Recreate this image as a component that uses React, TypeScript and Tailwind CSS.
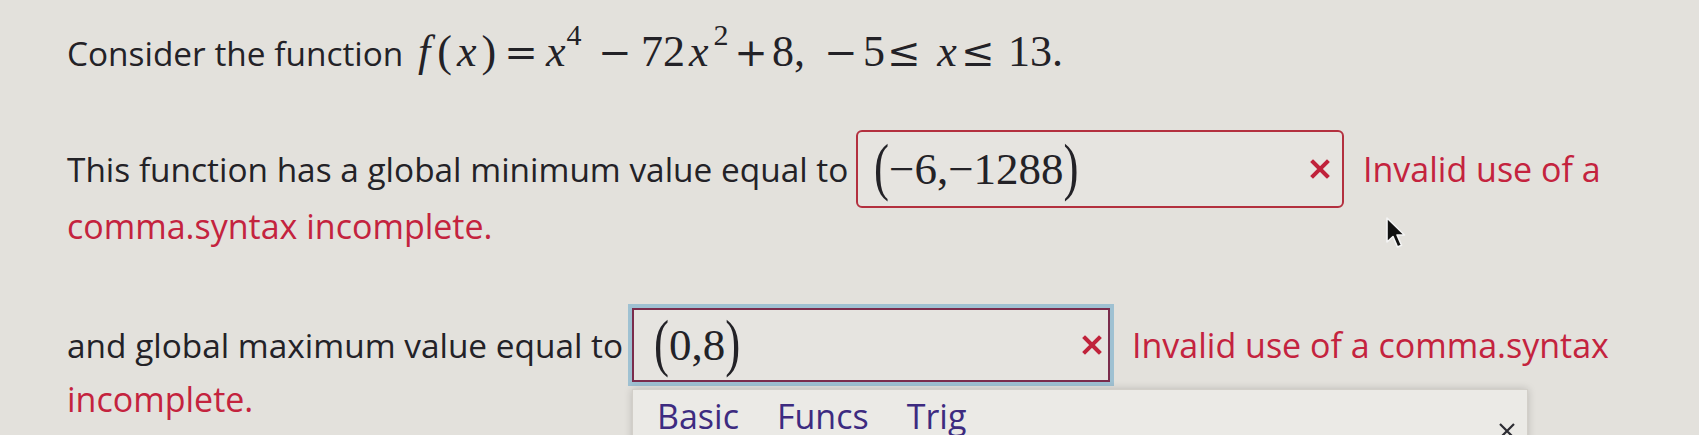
import React from "react";

const RedX = () => (
  <svg width="22" height="22" viewBox="0 0 22 22" className="shrink-0">
    <path d="M4 4 L18 18 M18 4 L4 18" stroke="#c0223b" strokeWidth="4" strokeLinecap="square" />
  </svg>
);

const Cursor = () => (
  <svg width="22" height="34" viewBox="0 0 22 34" className="absolute left-[1385px] top-[216px]">
    <path
      d="M2 2 L2 26 L8 20.5 L12.5 31 L16.5 29.3 L12 19 L19.5 19 Z"
      fill="#111"
      stroke="#f4f4f4"
      strokeWidth="1.6"
      strokeLinejoin="round"
    />
  </svg>
);

const Paren = ({ ch }: { ch: string }) => (
  <span className="inline-block scale-y-[1.4] origin-[50%_62%]">{ch}</span>
);

// binary operator / relation in a fixed slot (wide enough for the glyph) so spacing stays put
const Op = ({ ch, ml }: { ch: string; ml: string }) => (
  <span className={`inline-flex shrink-0 justify-center w-[34px] font-['DejaVu_Serif',serif] text-[40px] ${ml}`}>{ch}</span>
);

const App = () => {
  return (
    <div className="relative w-[1699px] h-[435px] overflow-hidden bg-[#e3e1dc] font-['Open_Sans',sans-serif] text-[33.4px] text-[#232227]">
      <div className="pl-[67px] pt-[29px]">
        {/* question line */}
        <div className="flex items-baseline h-[46px] leading-[46px] whitespace-nowrap">
          <span className="w-[346px] shrink-0">Consider the function</span>
          <span className="font-['Liberation_Serif',serif] text-[44px] leading-[46px] flex items-baseline">
            <span className="inline-flex shrink-0 w-[80px] ml-[5px]">
              <i className="pr-[7px]">f</i>(<i className="px-[5px]">x</i>)
            </span>
            <Op ch="=" ml="ml-[6px]" />
            <span className="inline-flex shrink-0 w-[36px] ml-[8px]">
              <i>x</i>
              <span className="relative -top-[17px] text-[30px] pl-[1px]">4</span>
            </span>
            <Op ch="−" ml="ml-[16px]" />
            <span className="inline-flex shrink-0 w-[89px] ml-[9px]">
              72<i className="pl-[4px]">x</i>
              <span className="relative -top-[17px] pl-[5px] text-[30px]">2</span>
            </span>
            <Op ch="+" ml="ml-[4px]" />
            <span className="inline-flex shrink-0 w-[33px] ml-[4px]">8,</span>
            <Op ch="−" ml="ml-[19px]" />
            <span className="inline-flex shrink-0 w-[22px] ml-[5px]">5</span>
            <Op ch="≤" ml="ml-[2px]" />
            <i className="inline-flex shrink-0 justify-center w-[20px] ml-[16px]">x</i>
            <Op ch="≤" ml="ml-[4px]" />
            <span className="ml-[13px]">13.</span>
          </span>
        </div>

        {/* minimum row */}
        <div className="mt-[55px] flex items-center leading-[46px] whitespace-nowrap">
          <span className="w-[781px] shrink-0">This function has a global minimum value equal to</span>
          <div className="ml-[8px] w-[488px] h-[78px] shrink-0 rounded-[6px] border-2 border-[#b3303f] bg-[#e6e4e0] flex items-center justify-between pl-[16px] pr-[11px]">
            <span className="font-['Liberation_Serif',serif] text-[45px] leading-none">
              <Paren ch="(" />−6,−1288<Paren ch=")" />
            </span>
            <RedX />
          </div>
          <span className="ml-[19px] text-[34px] text-[#c4233e]">Invalid use of a</span>
        </div>
        <div className="mt-[-5px] leading-[46px] text-[34px] text-[#c4233e]">comma.syntax incomplete.</div>

        {/* maximum row */}
        <div className="mt-[55px] flex items-center leading-[46px] whitespace-nowrap">
          <span className="w-[553px] shrink-0">and global maximum value equal to</span>
          <div className="relative ml-[8px] w-[486px] h-[82px] shrink-0 p-[4px] bg-[#9fc1d2]">
            <div className="h-full border-2 border-[#7b2c4c] bg-[#e6e4e0] flex items-center justify-between pl-[20px] pr-[5px]">
              <span className="font-['Liberation_Serif',serif] text-[45px] leading-none">
                <Paren ch="(" />0,8<Paren ch=")" />
              </span>
              <RedX />
            </div>

            {/* keypad popup */}
            <div className="absolute left-[4px] top-[85px] w-[896px] h-[110px] bg-[#ebeae6] border border-[#d2cfc9] shadow-[0_0_8px_rgba(0,0,0,0.18)] z-10">
              <div className="flex gap-[38px] pl-[24px] pt-[3px] leading-[46px] text-[34px] text-[#3d2b80]">
                <span>Basic</span>
                <span>Funcs</span>
                <span>Trig</span>
              </div>
              <svg width="20" height="20" viewBox="0 0 20 20" className="absolute right-[10px] top-[31px]">
                <path d="M3 3 L17 17 M17 3 L3 17" stroke="#2d2d33" strokeWidth="2.2" />
              </svg>
            </div>
          </div>
          <span className="ml-[18px] text-[34px] text-[#c4233e]">Invalid use of a comma.syntax</span>
        </div>
        <div className="mt-[-10px] leading-[46px] text-[34px] text-[#c4233e]">incomplete.</div>
      </div>
      <Cursor />
    </div>
  );
};

export default App;
